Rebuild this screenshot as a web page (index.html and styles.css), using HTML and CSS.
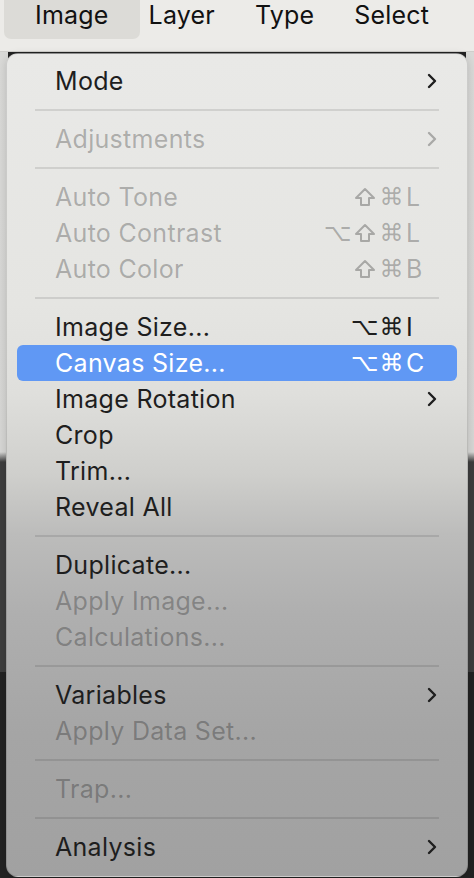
FILE: index.html
```html
<!DOCTYPE html>
<html lang="en">
<head>
<meta charset="utf-8">
<title>Image menu</title>
<link rel="stylesheet" href="styles.css">
</head>
<body>
<div class="screen">
  <header class="menubar">
    <div class="mb-item active">Image</div>
    <div class="mb-item">Layer</div>
    <div class="mb-item">Type</div>
    <div class="mb-item">Select</div>
  </header>
  <div class="workspace">
    <div class="side left"></div>
    <div class="side right"></div>
  </div>
  <div class="menu">
    <div class="item"><span class="label">Mode</span><svg class="chev" viewBox="0 0 10 16"><polyline points="2,2 8,8 2,14"/></svg></div>
    <div class="sep"></div>
    <div class="item disabled"><span class="label">Adjustments</span><svg class="chev" viewBox="0 0 10 16"><polyline points="2,2 8,8 2,14"/></svg></div>
    <div class="sep"></div>
    <div class="item disabled"><span class="label">Auto Tone</span><span class="sc"><span class="m"><svg class="shift" viewBox="0 0 22 20"><path d="M11 2 L20 11 L15 11 L15 18 L7 18 L7 11 L2 11 Z"/></svg></span><span class="m">⌘</span><span class="key">L</span></span></div>
    <div class="item disabled"><span class="label">Auto Contrast</span><span class="sc"><span class="m">⌥</span><span class="m"><svg class="shift" viewBox="0 0 22 20"><path d="M11 2 L20 11 L15 11 L15 18 L7 18 L7 11 L2 11 Z"/></svg></span><span class="m">⌘</span><span class="key">L</span></span></div>
    <div class="item disabled"><span class="label">Auto Color</span><span class="sc"><span class="m"><svg class="shift" viewBox="0 0 22 20"><path d="M11 2 L20 11 L15 11 L15 18 L7 18 L7 11 L2 11 Z"/></svg></span><span class="m">⌘</span><span class="key">B</span></span></div>
    <div class="sep"></div>
    <div class="item"><span class="label">Image Size...</span><span class="sc"><span class="m">⌥</span><span class="m">⌘</span><span class="key">I</span></span></div>
    <div class="item selected"><span class="label">Canvas Size...</span><span class="sc"><span class="m">⌥</span><span class="m">⌘</span><span class="key">C</span></span></div>
    <div class="item"><span class="label">Image Rotation</span><svg class="chev" viewBox="0 0 10 16"><polyline points="2,2 8,8 2,14"/></svg></div>
    <div class="item"><span class="label">Crop</span></div>
    <div class="item"><span class="label">Trim...</span></div>
    <div class="item"><span class="label">Reveal All</span></div>
    <div class="sep"></div>
    <div class="item"><span class="label">Duplicate...</span></div>
    <div class="item disabled"><span class="label">Apply Image...</span></div>
    <div class="item disabled"><span class="label">Calculations...</span></div>
    <div class="sep"></div>
    <div class="item"><span class="label">Variables</span><svg class="chev" viewBox="0 0 10 16"><polyline points="2,2 8,8 2,14"/></svg></div>
    <div class="item disabled"><span class="label">Apply Data Set...</span></div>
    <div class="sep"></div>
    <div class="item disabled"><span class="label">Trap...</span></div>
    <div class="sep"></div>
    <div class="item"><span class="label">Analysis</span><svg class="chev" viewBox="0 0 10 16"><polyline points="2,2 8,8 2,14"/></svg></div>
  </div>
</div>
</body>
</html>
```
FILE: styles.css
```css
* { box-sizing: border-box; }
html, body { margin: 0; padding: 0; }
body {
  width: 474px;
  height: 878px;
  overflow: hidden;
  font-family: Inter, "Liberation Sans", sans-serif;
  background: #222;
}
.screen {
  position: relative;
  width: 474px;
  height: 878px;
  display: flex;
  flex-direction: column;
}
.menubar {
  height: 52px;
  flex: none;
  display: flex;
  align-items: flex-start;
  padding-left: 4px;
  background: #ecebe8;
  border-bottom: 1px solid #cfcecb;
  font-size: 25px;
  letter-spacing: 0.2px;
  color: #111;
}
.mb-item {
  height: 39px;
  line-height: 31px;
  padding: 0 20px;
}
.mb-item.active {
  padding: 0 31px;
  margin-right: -11px;
  background: #dcdbd7;
  border-radius: 0 0 7px 7px;
}
.workspace {
  flex: 1;
  display: flex;
  justify-content: space-between;
}
.side {
  width: 8px;
  background: linear-gradient(#d9d9d7 0, #d6d6d4 400px, #3d3d3d 410px, #3d3d3d 620px, #222 620px);
}
.menu {
  position: absolute;
  left: 6px;
  top: 53px;
  width: 462px;
  height: 824px;
  padding: 9px 10px 11px;
  border-radius: 12px;
  border: 1px solid rgba(0,0,0,0.12);
  background: linear-gradient(#e9e9e7 0, #e5e5e2 250px, #dfdfdc 340px, #cfcfcc 420px, #bcbcbb 480px, #afafaf 560px, #a5a5a5 680px, #a1a1a1 824px);
  box-shadow: 0 2px 8px rgba(0,0,0,0.15);
  font-size: 25px;
  letter-spacing: 0.3px;
  color: #1e1e1e;
}
.item {
  height: 36px;
  display: flex;
  align-items: center;
  padding: 0 20px 0 38px;
  border-radius: 6px;
}
.item .label { flex: 1; white-space: nowrap; }
.item.disabled { color: rgba(0,0,0,0.27); }
.item.selected { background: #6098f4; color: #fff; }
.sep {
  height: 22px;
  display: flex;
  align-items: center;
  padding: 0 18px;
}
.sep::before {
  content: "";
  flex: 1;
  height: 2px;
  background: rgba(0,0,0,0.1);
}
.chev {
  width: 10px;
  height: 16px;
  fill: none;
  stroke: currentColor;
  stroke-width: 2.4;
  stroke-linecap: round;
  stroke-linejoin: round;
}
.sc {
  display: flex;
  align-items: center;
  margin-right: 12px;
}
.m {
  width: 27px;
  display: flex;
  justify-content: center;
  align-items: center;
  font-family: "DejaVu Sans", sans-serif;
  font-size: 24px;
  letter-spacing: 0;
}
.shift {
  width: 22px;
  height: 20px;
  fill: none;
  stroke: currentColor;
  stroke-width: 2;
  stroke-linejoin: round;
}
.key {
  width: 20px;
  padding-left: 1px;
  text-align: left;
}
```
